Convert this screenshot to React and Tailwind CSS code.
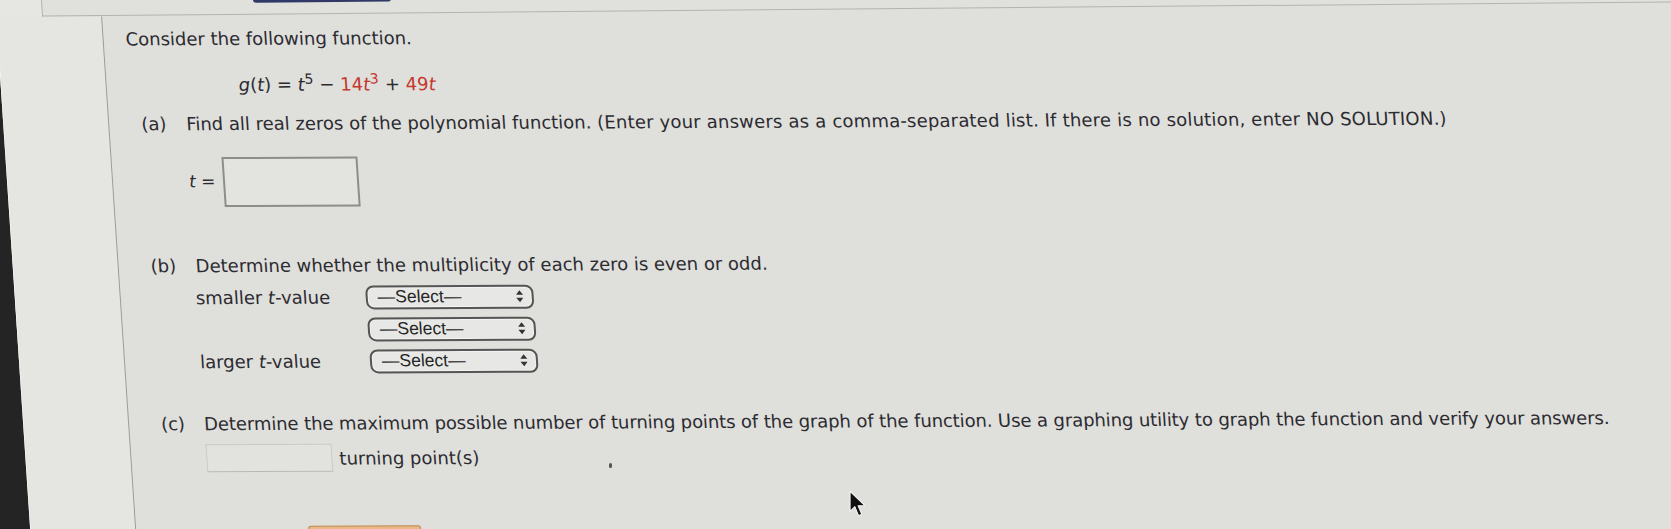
const SelectBox = () => (
  <div className="flex h-[24px] w-[168px] items-center justify-between rounded-[8px] border-2 border-[#555] bg-[#e7e7e5] pl-[10px] pr-[8px] shadow-[inset_0_0_0_1px_#f3f3f1] font-['Liberation_Sans',Arial,sans-serif] text-[17.5px] leading-none text-[#262626]">
    <span>—Select—</span>
    <svg width="8" height="13" viewBox="0 0 8 13" fill="#333">
      <path d="M4 0.5 L7.5 5 H0.5 Z" />
      <path d="M4 12.5 L0.5 8 H7.5 Z" />
    </svg>
  </div>
);

const Part = ({ label, children, className = '', labelWidth = 'w-[45px]' }) => (
  <div className={`ml-[10px] flex whitespace-nowrap leading-[24px] ${className}`}>
    <span className={labelWidth}>{label}</span>
    <span>{children}</span>
  </div>
);

export default function App() {
  return (
    <div className="relative h-[529px] w-[1671px] overflow-hidden bg-[#242424]">
      {/* photographed page, sheared a little like the camera saw it */}
      <div className="-ml-[5px] h-[570px] w-[1750px] origin-top-left border-l border-[#f2f2f0] bg-[#dfdfdb] font-['DejaVu_Sans',Verdana,sans-serif] text-[18px] text-[#2c2b31] [transform:skewX(3.8deg)_skewY(-0.25deg)]">
        {/* top bar */}
        <div className="flex h-[17px] origin-left [transform:skewY(-0.25deg)]">
          <div className="w-[45px] bg-[#e6e6e3]" />
          <div className="flex-1 border-b border-l border-[#b3b3b0] bg-[#e0e0dc]">
            <div className="ml-[211px] h-[5px] w-[138px] rounded-b-[3px] bg-[#2f3866]" />
          </div>
        </div>

        <div className="flex h-[553px]">
          <div className="w-[105px] border-r border-[#9c9c99] bg-[#e5e5e2]" />

          <div className="flex-1 pl-[22px]">
            <p className="mt-[11px] leading-[24px]">Consider the following function.</p>

            <p className="ml-[110px] mt-[22px] leading-[24px]">
              <i>g</i>(<i>t</i>) = <i>t</i><sup className="text-[14px]">5</sup> − <span className="text-[#c6372f]">14<i>t</i><sup className="text-[14px]">3</sup></span> + <span className="text-[#c6372f]">49<i>t</i></span>
            </p>

            <Part label="(a)" className="mt-[15px]">
              Find all real zeros of the polynomial function.{' '}
              <span className="tracking-[0.2px]">(Enter your answers as a comma-separated list. If there is no solution, enter NO SOLUTION.)</span>
            </Part>

            <div className="ml-[54px] mt-[21px] flex items-center gap-[8px]">
              <span className="text-[17px]"><i>t</i> =</span>
              <input type="text" className="h-[50px] w-[136px] border-2 border-[#8d8d8b] bg-[#e3e3e0] outline-none" />
            </div>

            <Part label="(b)" className="mt-[47px]">
              Determine whether the multiplicity of each zero is even or odd.
            </Part>

            <div className="ml-[53px] mt-[6px] flex flex-col gap-[6.5px]">
              <div className="flex items-center">
                <span className="w-[170px]">smaller <i>t</i>-value</span>
                <SelectBox />
              </div>
              <div className="flex items-center">
                <span className="w-[170px]" />
                <SelectBox />
              </div>
              <div className="flex items-center">
                <span className="w-[170px]">larger <i>t</i>-value</span>
                <SelectBox />
              </div>
            </div>

            <Part label="(c)" labelWidth="w-[43px]" className="mt-[37px] tracking-[-0.1px]">
              Determine the maximum possible number of turning points of the graph of the function. Use a graphing utility to graph the function and verify your answers.
            </Part>

            <div className="ml-[53px] mt-[8px] flex items-center gap-[7px]">
              <input type="text" className="h-[28px] w-[126px] border border-[#cacac7] border-b-[#b9b9b6] bg-[#e2e2df] outline-none" />
              <span>turning point(s)</span>
            </div>

            <button
              aria-label="Submit"
              className="ml-[150px] mt-[54px] h-[32px] w-[113px] rounded-[3px] border border-[#c08a52] bg-[#e9b985]"
            />
          </div>
        </div>
      </div>

      {/* mouse pointer and a speck on the screen */}
      <div className="absolute left-[609px] top-[463px] h-[5px] w-[3px] rounded-full bg-[#555]" />
      <svg className="absolute left-[849px] top-[490px]" width="17" height="28" viewBox="0 0 16 26">
        <path d="M1 1 L1 20 L5.5 15.5 L9 24 L12 22.6 L8.6 14.6 L15 14.6 Z" fill="#111" stroke="#f4f4f4" strokeWidth="1" strokeLinejoin="round" />
      </svg>
    </div>
  );
}
